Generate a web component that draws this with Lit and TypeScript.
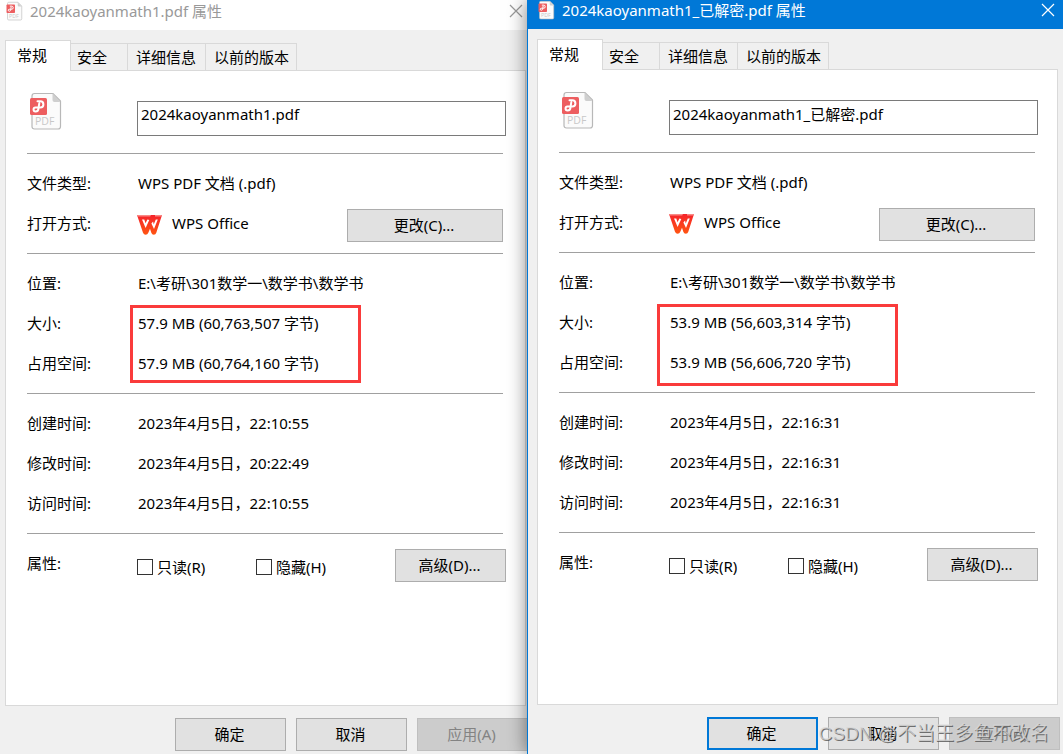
import { LitElement, html, css, svg } from "lit";
import { customElement, property } from "lit/decorators.js";

interface FileInfo {
  name: string;
  location: string;
  size: string;
  sizeOnDisk: string;
  created: string;
  modified: string;
  accessed: string;
}

const LOCKED: FileInfo = {
  name: "2024kaoyanmath1.pdf",
  location: "E:\\考研\\301数学一\\数学书\\数学书",
  size: "57.9 MB (60,763,507 字节)",
  sizeOnDisk: "57.9 MB (60,764,160 字节)",
  created: "2023年4月5日，22:10:55",
  modified: "2023年4月5日，20:22:49",
  accessed: "2023年4月5日，22:10:55",
};

const UNLOCKED: FileInfo = {
  name: "2024kaoyanmath1_已解密.pdf",
  location: "E:\\考研\\301数学一\\数学书\\数学书",
  size: "53.9 MB (56,603,314 字节)",
  sizeOnDisk: "53.9 MB (56,606,720 字节)",
  created: "2023年4月5日，22:16:31",
  modified: "2023年4月5日，22:16:31",
  accessed: "2023年4月5日，22:16:31",
};

const TABS = ["常规", "安全", "详细信息", "以前的版本"];

const pdfIcon = (cls: string) => html`
  <svg class=${cls} viewBox="0 0 34 40" aria-hidden="true">
    ${svg`
      <path d="M5.500 2.500h18.500l7.500 7.500v25.500q0 2.500-2.500 2.500h-23.500q-2.500 0-2.500-2.500v-30.500q0-2.500 2.500-2.500z" fill="#fbfbfb" stroke="#b8b8b8" stroke-width="1.200"/>
      <path d="M23.500 2.500l8 8.500h-6q-2 0-2-2z" fill="#cfcfcf"/>
      <rect x="1" y="7" width="17" height="17" rx="1.500" fill="#ed5e60"/>
      <path d="M8.500 10.300h2.800a3.100 3.100 0 0 1 0 6.200h-4.800a1.900 1.900 0 0 0 0 3.900c2 0 3-1.200 3-3.200l.8-5" fill="none" stroke="#fff" stroke-width="2" stroke-linecap="round" stroke-linejoin="round"/>
      <text x="6" y="34" font-size="10.500" font-family="Open Sans" fill="#c8c8c8">PDF</text>`}
  </svg>
`;

const wpsIcon = html`
  <svg class="wps" viewBox="0 0 25 20" aria-hidden="true">
    <defs>
      <linearGradient id="wps-fill" x1="0" y1="0" x2="0" y2="1">
        <stop offset="0" stop-color="#f5232b" />
        <stop offset="1" stop-color="#ff5512" />
      </linearGradient>
    </defs>
    <path d="M0 0h25l-5.700 17.800Q18.700 19.800 16.800 19.800q-1.900 0-2.500-2l-1.300-4-1.700 4q-.8 2-2.600 2-1.900 0-2.700-2z" fill="url(#wps-fill)" />
    <path d="M0 0h14l-.8 1.500H.5zM18 0h7l-.5 1.500h-6.500z" fill="#f98a86" />
    <path d="M5 4.500l3.600 8.500L12.300 5l-1.900-.5-1.900 3.700-1.200-3.700zM14.400 8.500l2.600 5.500L20.800 4.500h-2l-2.100 5-.6-3z" fill="#fff" />
  </svg>
`;

@customElement("file-properties")
export class FileProperties extends LitElement {
  @property({ attribute: false }) file!: FileInfo;
  @property({ type: Boolean, reflect: true }) active = false;

  static styles = css`
    :host {
      --inset: 5px;
      box-sizing: border-box;
      display: flex;
      flex-direction: column;
      min-height: 100vh;
      background: #f0f0f0;
      color: #000;
      font-size: 15px;
      line-height: 20px;
    }
    :host([active]) {
      --inset: 9px;
      border-left: 1px solid #0078d7;
      box-shadow: 0 0 18px rgba(0, 0, 0, 0.5);
    }
    * {
      box-sizing: border-box;
    }
    button,
    input {
      font: inherit;
      color: inherit;
      margin: 0;
    }
    .title {
      display: flex;
      align-items: flex-start;
      height: 30px;
      padding: 1px 8px 0 6px;
      background: #fff;
      color: #999;
    }
    :host([active]) .title {
      height: 29px;
      padding-top: 0;
      padding-left: 10px;
      background: #0078d7;
      color: #fff;
    }
    .title h1 {
      flex: 1;
      margin: 0 0 0 7px;
      font-size: inherit;
      font-weight: normal;
    }
    .small-icon {
      width: 17px;
      height: 20px;
    }
    .close {
      display: flex;
      margin-top: 3px;
      padding: 0;
      border: 0;
      background: none;
    }
    .close svg {
      width: 14px;
      height: 14px;
    }
    .tabs {
      display: flex;
      align-items: flex-end;
      height: 40px;
      padding: 10px var(--inset) 0;
    }
    .tab {
      height: 27px;
      padding: 0 7px 0 8px;
      border: 1px solid #d9d9d9;
      border-width: 1px 1px 0 0;
      background: #f0f0f0;
      white-space: nowrap;
    }
    .tab:nth-child(2) {
      padding: 0 20px 0 6px;
    }
    .tab:nth-child(3) {
      padding-right: 9px;
    }
    .tab[aria-selected="true"] {
      position: relative;
      height: 31px;
      margin-bottom: -1px;
      padding: 0 23px 2px 11px;
      border-left-width: 1px;
      background: #fff;
    }
    .panel {
      flex: 1;
      margin: 0 5px 0 var(--inset);
      padding: 0 19px 20px 21px;
      border: 1px solid #d9d9d9;
      background: #fff;
    }
    .head {
      display: grid;
      grid-template-columns: 110px 1fr;
      align-items: start;
      height: 82px;
      padding-top: 20px;
    }
    .big-icon {
      width: 34px;
      height: 40px;
      margin-left: 2px;
    }
    .name {
      width: 100%;
      height: 35px;
      margin-top: 10px;
      padding: 0 3px 9px;
      border: 1px solid #7a7a7a;
      border-radius: 0;
      background: #fff;
      outline: 0;
    }
    .section {
      position: relative;
      margin: 0 3px 0 0;
      padding: 9px 0 10px;
      border-top: 1px solid #a0a0a0;
    }
    .row {
      display: grid;
      grid-template-columns: 111px 1fr;
      align-items: center;
      height: 40px;
    }
    dt,
    dd {
      margin: 0;
      white-space: nowrap;
    }
    .opener {
      display: flex;
      align-items: center;
      height: 40px;
    }
    .wps {
      width: 25px;
      height: 20px;
      margin: 3px 10px 0 -1px;
    }
    .button {
      width: 111px;
      height: 33px;
      padding: 0 2px 2px 0;
      border: 1px solid #adadad;
      border-radius: 0;
      background: #e1e1e1;
      text-align: center;
    }
    .button.wide {
      width: 156px;
    }
    dd .button {
      align-self: flex-end;
      margin: 0 0 1px auto;
    }
    .button.default {
      border: 2px solid #0078d7;
    }
    .button:disabled {
      border-color: #bfbfbf;
      background: #ccc;
      color: #838383;
    }
    .flags {
      display: flex;
      align-items: flex-start;
      height: 40px;
      margin: 0 -3px 0 -1px;
    }
    .flag {
      display: flex;
      align-items: center;
      gap: 4px;
      width: 119px;
      padding-top: 14px;
    }
    .flag input {
      appearance: none;
      width: 16px;
      height: 16px;
      border: 1px solid #333;
      background: #fff;
    }
    .mark {
      position: absolute;
      top: 51px;
      left: 103px;
      width: 231px;
      height: 78px;
      border: 3px solid #fa3b3b;
      pointer-events: none;
    }
    :host([active]) .mark {
      left: 98px;
      width: 241px;
      height: 82px;
    }
    .footer {
      display: flex;
      justify-content: flex-end;
      gap: 10px;
      padding: 12px 3px 3px;
    }
    :host([active]) .footer {
      padding-bottom: 4px;
    }
  `;

  private row(label: string, value: string) {
    return html`<div class="row"><dt>${label}</dt><dd>${value}</dd></div>`;
  }

  render() {
    const f = this.file;
    return html`
      <header class="title">
        ${pdfIcon("small-icon")}
        <h1>${f.name} 属性</h1>
        <button class="close" aria-label="关闭">
          <svg viewBox="0 0 14 14"><path d="M1 1l12 12M13 1L1 13" fill="none" stroke="currentColor" stroke-width="1.200" /></svg>
        </button>
      </header>
      <div class="tabs" role="tablist">
        ${TABS.map(
          (t, i) => html`<button class="tab" role="tab" aria-selected=${i === 0 ? "true" : "false"}>${t}</button>`
        )}
      </div>
      <main class="panel">
        <div class="head">
          ${pdfIcon("big-icon")}
          <input class="name" type="text" aria-label="文件名" .value=${f.name} />
        </div>
        <dl class="section">
          ${this.row("文件类型:", "WPS PDF 文档 (.pdf)")}
          <div class="row">
            <dt>打开方式:</dt>
            <dd class="opener">${wpsIcon}<span>WPS Office</span><button class="button wide">更改(C)...</button></dd>
          </div>
        </dl>
        <dl class="section">
          ${this.row("位置:", f.location)} ${this.row("大小:", f.size)}
          ${this.row("占用空间:", f.sizeOnDisk)}
          <div class="mark"></div>
        </dl>
        <dl class="section">
          ${this.row("创建时间:", f.created)} ${this.row("修改时间:", f.modified)}
          ${this.row("访问时间:", f.accessed)}
        </dl>
        <dl class="section">
          <div class="row">
            <dt>属性:</dt>
            <dd class="flags">
              <label class="flag"><input type="checkbox" />只读(R)</label>
              <label class="flag"><input type="checkbox" />隐藏(H)</label>
              <button class="button">高级(D)...</button>
            </dd>
          </div>
        </dl>
      </main>
      <footer class="footer">
        <button class="button ${this.active ? "default" : ""}">确定</button>
        <button class="button">取消</button>
        <button class="button" disabled>应用(A)</button>
      </footer>
    `;
  }
}

@customElement("app-root")
export class AppRoot extends LitElement {
  static styles = css`
    :host {
      display: block;
      position: relative;
      overflow: hidden;
      font-family: "Noto Sans", "Noto Sans CJK SC", sans-serif;
    }
    .desk {
      display: flex;
    }
    .back {
      flex: 1 1 0;
      min-width: 0;
    }
    .front {
      position: relative;
      flex: 1 1 5px;
      min-width: 0;
      margin-left: -4px;
    }
    .watermark {
      position: absolute;
      right: 14px;
      bottom: 6px;
      font-family: "Liberation Sans", "Noto Sans CJK SC", sans-serif;
      font-size: 19px;
      line-height: 28px;
      color: rgba(215, 215, 215, 0.75);
      text-shadow: 1px 1px 0 rgba(80, 80, 80, 0.8);
      white-space: nowrap;
      pointer-events: none;
    }
  `;

  render() {
    return html`
      <div class="desk">
        <file-properties class="back" .file=${LOCKED}></file-properties>
        <file-properties class="front" active .file=${UNLOCKED}></file-properties>
      </div>
      <div class="watermark">CSDN @不当王多鱼不改名</div>
    `;
  }
}
